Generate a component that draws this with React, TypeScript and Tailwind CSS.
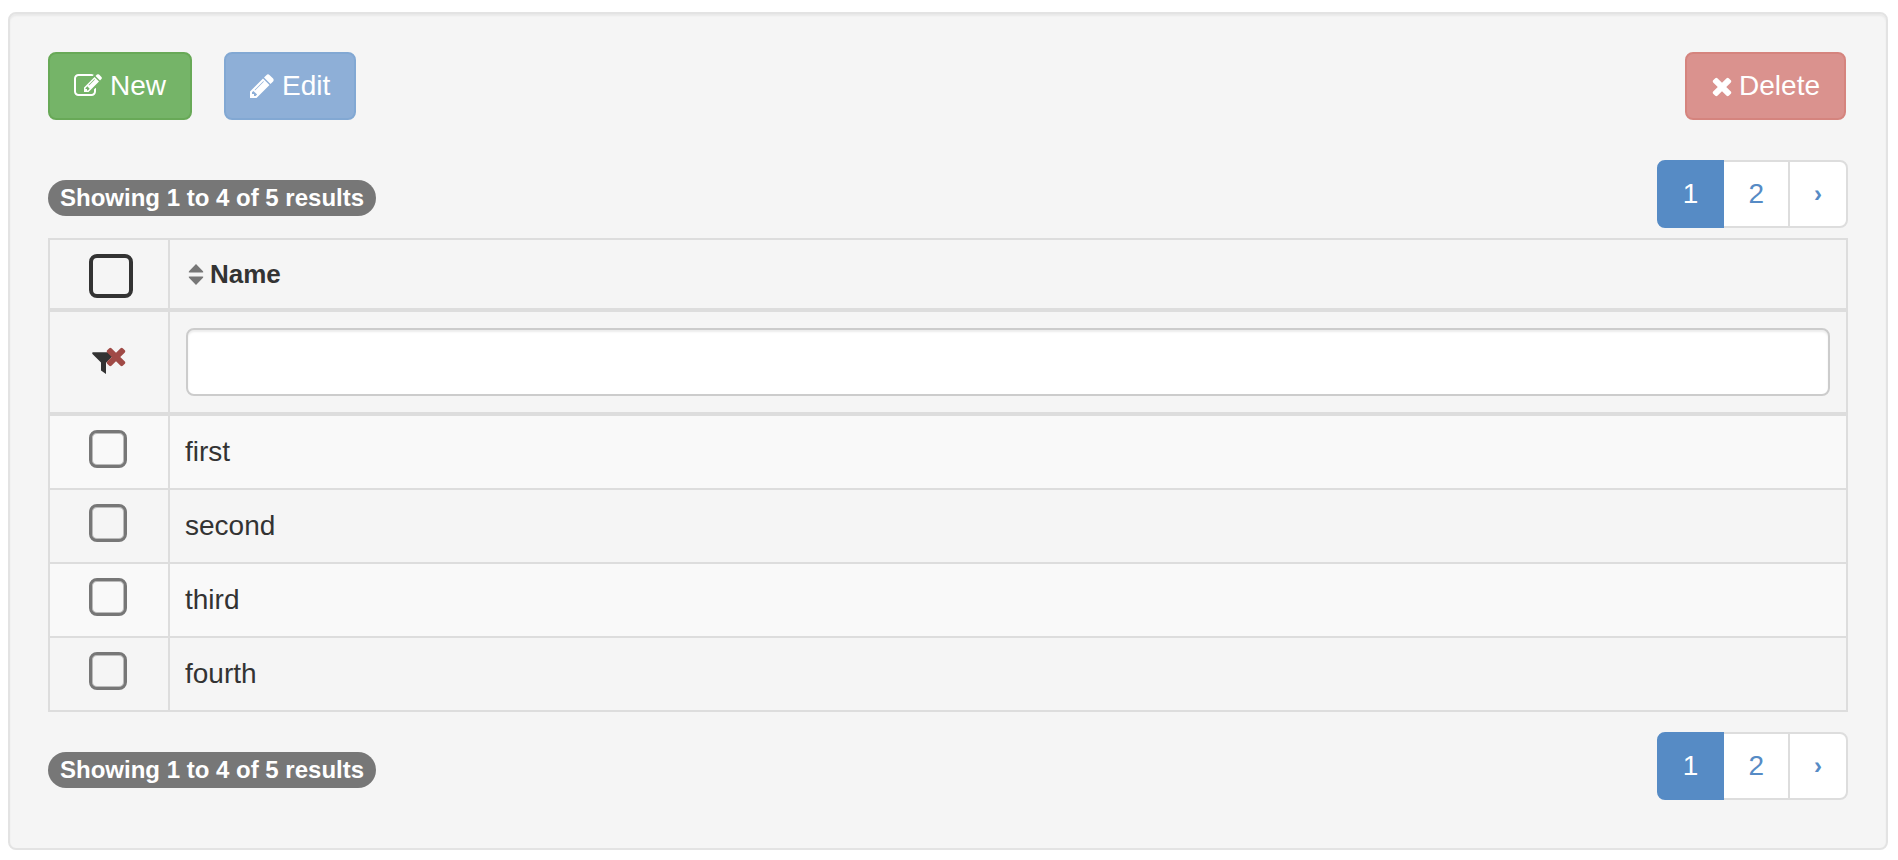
import type { ReactNode } from 'react'

const rows = ['first', 'second', 'third', 'fourth']

const icons = {
  edit: {
    viewBox: '0 0 1792 1792',
    d: 'M888 1184l116-116-152-152-116 116v56h96v96h56zm440-720q-16-16-33 1l-350 350q-17 17-1 33t33-1l350-350q17-17 1-33zm80 594v190q0 119-84.5 203.5t-203.5 84.5h-832q-119 0-203.5-84.5t-84.5-203.5v-832q0-119 84.5-203.5t203.5-84.5h832q63 0 117 25 15 7 18 23 3 17-9 29l-49 49q-14 14-32 8-23-6-45-6h-832q-66 0-113 47t-47 113v832q0 66 47 113t113 47h832q66 0 113-47t47-113v-126q0-13 9-22l64-64q15-15 35-7t20 29zm-96-738l288 288-672 672h-288v-288zm444 132l-92 92-288-288 92-92q28-28 68-28t68 28l152 152q28 28 28 68t-28 68z',
  },
  pencil: {
    viewBox: '128 0 1536 1792',
    d: 'M491 1536l91-91-235-235-91 91v107h128v128h107zm523-928q0-22-22-22-10 0-17 7l-542 542q-7 7-7 17 0 22 22 22 10 0 17-7l542-542q7-7 7-17zm-54-192l416 416-832 832h-416v-416zm683 96q0 53-37 90l-166 166-416-416 166-165q36-38 90-38 53 0 91 38l235 234q37 39 37 91z',
  },
  times: {
    viewBox: '192 0 1408 1792',
    d: 'M1490 1322q0 40-28 68l-136 136q-28 28-68 28t-68-28l-294-294-294 294q-28 28-68 28t-68-28l-136-136q-28-28-28-68t28-68l294-294-294-294q-28-28-28-68t28-68l136-136q28-28 68-28t68 28l294 294 294-294q28-28 68-28t68 28l136 136q28 28 28 68t-28 68l-294 294 294 294q28 28 28 68z',
  },
}

function Icon({ name, className }: { name: keyof typeof icons; className: string }) {
  return (
    <svg viewBox={icons[name].viewBox} className={className} fill="currentColor" aria-hidden="true">
      <path d={icons[name].d} />
    </svg>
  )
}

function Button({ className, children }: { className: string; children: ReactNode }) {
  return (
    <button
      type="button"
      className={`flex h-[68px] items-center rounded-lg border-2 px-6 text-[28px] leading-10 text-white ${className}`}
    >
      {children}
    </button>
  )
}

function Summary() {
  return (
    <span className="rounded-full bg-[#777777] px-3 text-2xl leading-9 font-bold text-white">
      Showing 1 to 4 of 5 results
    </span>
  )
}

function Pagination() {
  return (
    <nav aria-label="Pages" className="flex text-[28px] leading-10 text-[#568bc5]">
      <a
        href="#1"
        aria-current="page"
        className="rounded-l-lg border-2 border-[#568bc5] bg-[#568bc5] px-6 py-3 text-white"
      >
        1
      </a>
      <a href="#2" className="border-y-2 border-[#dddddd] bg-white px-6 py-3">
        2
      </a>
      <a
        href="#next"
        aria-label="Next"
        className="rounded-r-lg border-2 border-[#dddddd] bg-white px-6 py-3 text-2xl leading-10 font-bold"
      >
        ›
      </a>
    </nav>
  )
}

export default function App() {
  return (
    <main className="mt-3 mr-[10px] mb-[10px] ml-2 rounded-lg border-2 border-[#e3e3e3] bg-[#f5f5f5] px-[38px] pt-[38px] pb-12 font-['Liberation_Sans',Arial,sans-serif] text-[#333333] shadow-[inset_0_2px_2px_rgba(0,0,0,0.05)]">
      <div className="flex items-center gap-8 pr-[2px]">
        <Button className="gap-2 border-[#68a957] bg-[#75b468]">
          <Icon name="edit" className="h-7 w-7" />
          New
        </Button>
        <Button className="gap-2 border-[#82a8d3] bg-[#8eafd7]">
          <Icon name="pencil" className="h-7 w-6" />
          Edit
        </Button>
        <Button className="ml-auto gap-[6px] border-[#d5847e] bg-[#da928e]">
          <Icon name="times" className="h-7 w-[22px]" />
          Delete
        </Button>
      </div>

      <div className="mt-10 mb-[10px] flex items-center justify-between">
        <div className="flex pt-2">
          <Summary />
        </div>
        <Pagination />
      </div>

      <table className="w-full border-separate border-spacing-0 border-r-2 border-b-2 border-[#dddddd] text-left">
        <thead>
          <tr>
            <th className="h-[70px] w-[120px] border-t-2 border-l-2 border-[#dddddd] pt-[14px] pl-[39px] align-top">
              <input
                type="checkbox"
                aria-label="Select all"
                className="block h-11 w-11 appearance-none rounded-lg border-4 border-[#333333]"
              />
            </th>
            <th className="border-t-2 border-l-2 border-[#dddddd] px-4">
              <div className="flex items-center gap-1 text-[26px] leading-9">
                <svg viewBox="0 0 20 24" className="h-6 w-5" fill="#777777" aria-hidden="true">
                  <path d="M10 2l7 7.3q1 1.2-.6 1.2H3.6q-1.6 0-.6-1.2zM10 23l7-7.3q1-1.2-.6-1.2H3.6q-1.6 0-.6 1.2z" />
                </svg>
                Name
              </div>
            </th>
          </tr>
          <tr>
            <td className="h-[104px] border-t-4 border-l-2 border-[#dddddd] pl-10">
              <button type="button" aria-label="Clear filter" className="block">
                <svg viewBox="0 0 38 30" className="h-[30px] w-[38px]" aria-hidden="true">
                  <path d="M2.5 5.2H22l.5 4-6.500 6.500V27L11 23.500V15.500L2.200 6.700z" fill="#333333" />
                  <path d={icons.times.d} transform="translate(12 -5) scale(0.015625)" fill="#a04a46" />
                </svg>
              </button>
            </td>
            <td className="border-t-4 border-l-2 border-[#dddddd] px-4">
              <input
                type="text"
                aria-label="Filter by name"
                className="block h-[68px] w-full rounded-lg border-2 border-[#cccccc] bg-white px-6 text-[28px] shadow-[inset_0_2px_2px_rgba(0,0,0,0.075)]"
              />
            </td>
          </tr>
        </thead>
        <tbody className="[&>tr:first-child>td]:h-[76px] [&>tr:first-child>td]:border-t-4">
          {rows.map((row) => (
            <tr key={row} className="odd:bg-[#f9f9f9]">
              <td className="h-[74px] border-t-2 border-l-2 border-[#dddddd] pt-[14px] pl-[39px] align-top">
                <input
                  type="checkbox"
                  id={row}
                  className="block h-[38px] w-[38px] appearance-none rounded-lg border-3 border-[#777777] shadow-[inset_0_0_0_1px_#bbbbbb]"
                />
              </td>
              <td className="border-t-2 border-l-2 border-[#dddddd] px-[15px] text-[28px] leading-10">
                <label htmlFor={row}>{row}</label>
              </td>
            </tr>
          ))}
        </tbody>
      </table>

      <div className="mt-5 flex items-center justify-between">
        <div className="flex pt-2">
          <Summary />
        </div>
        <Pagination />
      </div>
    </main>
  )
}
